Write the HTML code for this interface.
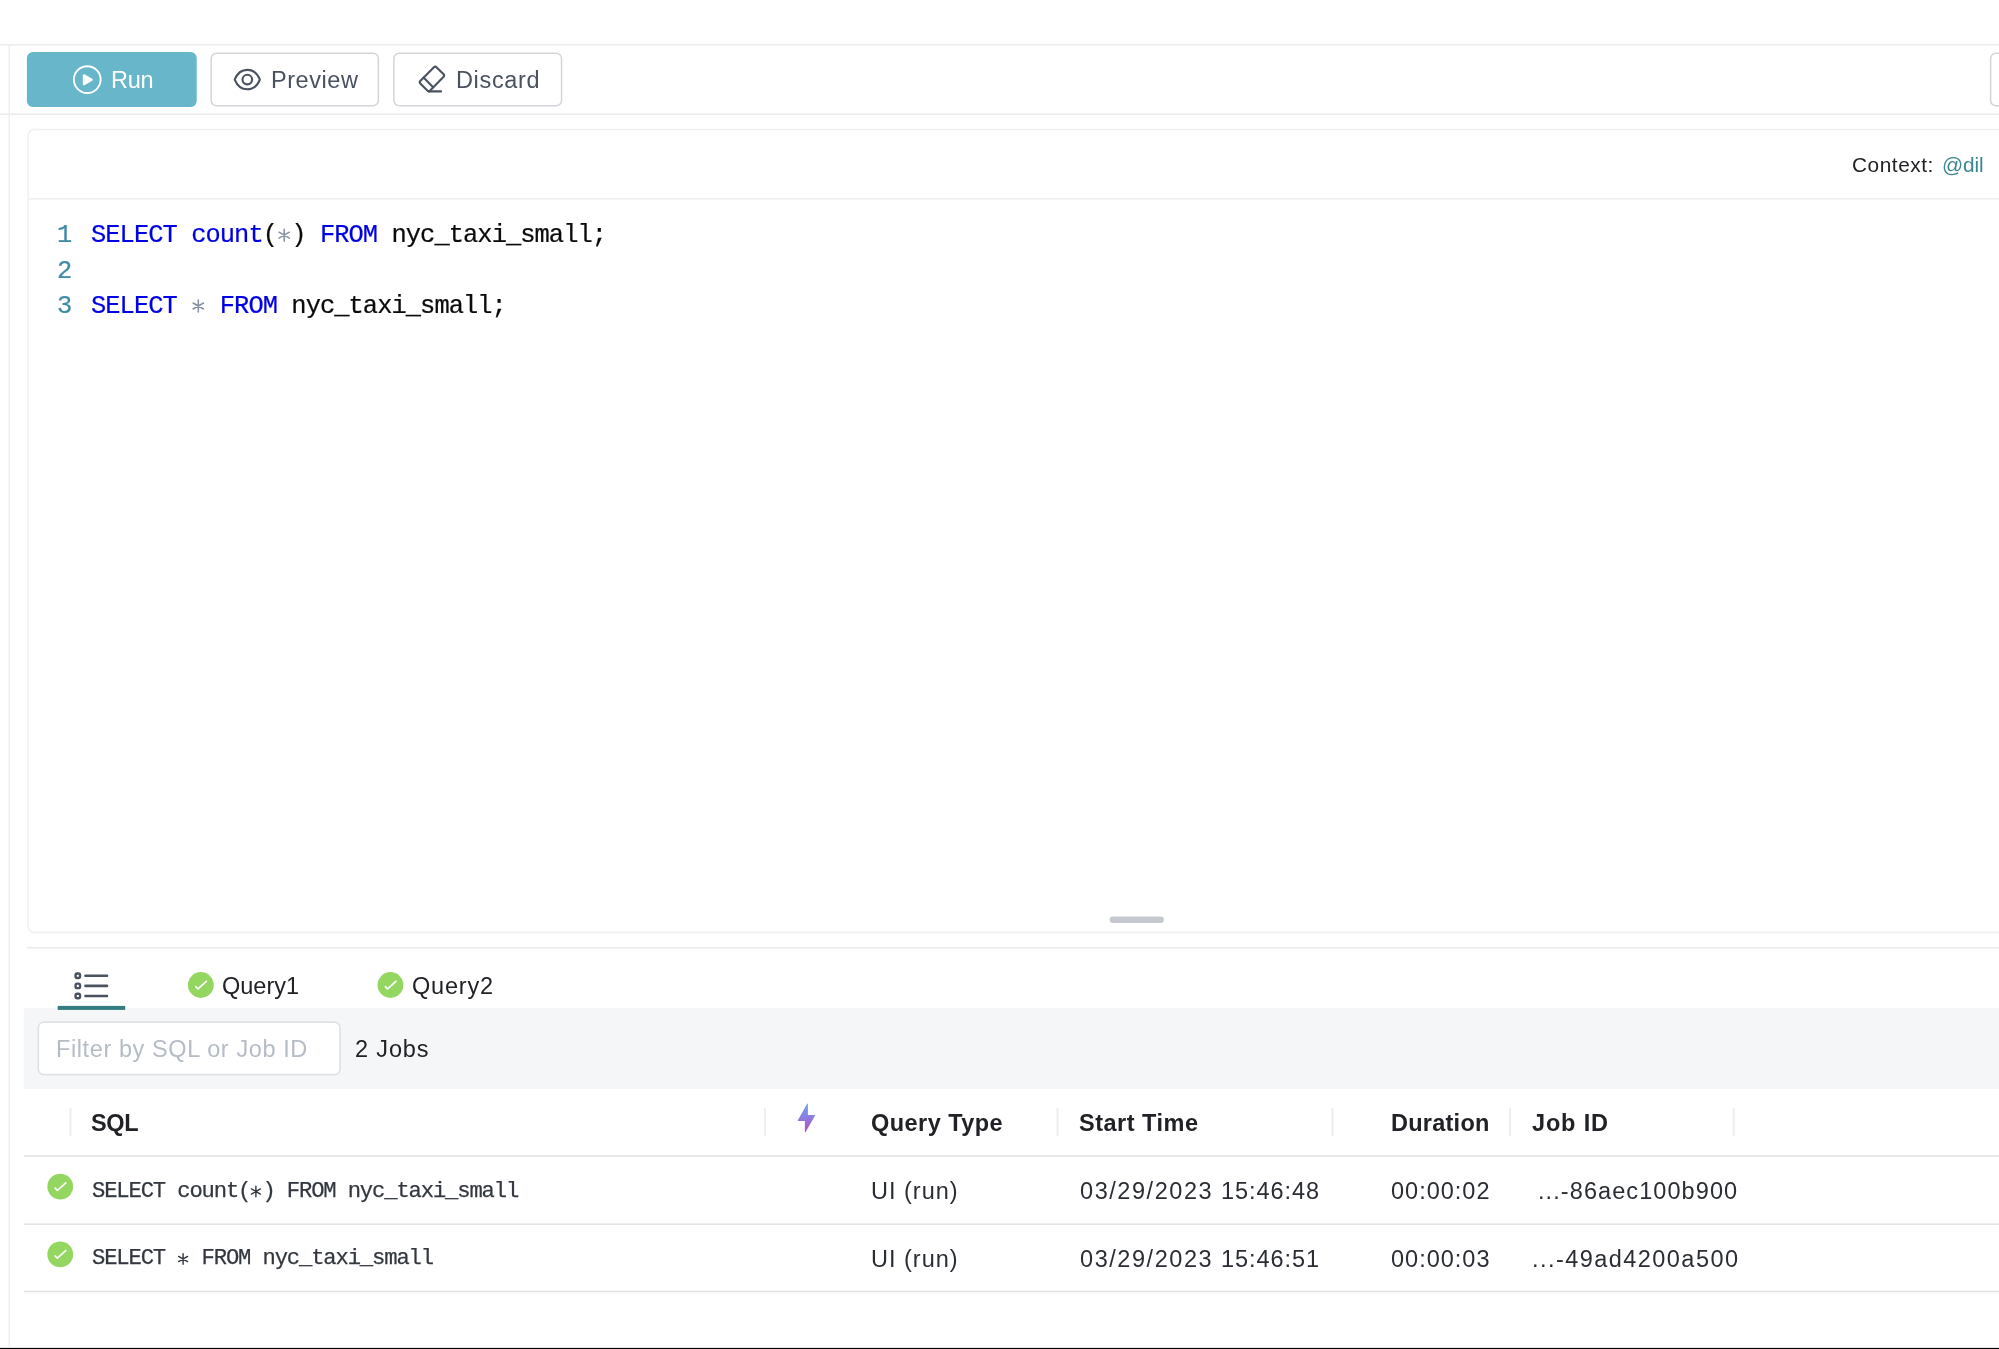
<!DOCTYPE html>
<html>
<head>
<meta charset="utf-8">
<title>SQL Runner</title>
<style>
  html, body { margin: 0; padding: 0; }
  body {
    width: 1999px; height: 1349px; overflow: hidden; position: relative;
    background: #ffffff;
    font-family: "Liberation Sans", sans-serif;
    color: #202226;
  }
  .abs { position: absolute; }
  .t, .code, .tdm { will-change: transform; }
  .t { position: absolute; white-space: nowrap; font-size: 23.5px; line-height: 30px; }
  .btnt { color: #4a5260; }
  .code {
    position: absolute; font-family: "Liberation Mono", monospace; font-size: 25.4px;
    letter-spacing: -0.93px; white-space: pre; line-height: 35.6px; color: #0b0b0b;
    -webkit-text-stroke: 0.22px currentColor;
  }
  .ln { color: #3f8ba6; }
  .kw { color: #0000e6; }
  .op { color: transparent; -webkit-text-stroke: 0 transparent; }
  .th { font-weight: bold; color: #202226; }
  .td { color: #2a2d33; }
  .tdm { position: absolute; font-family: "Liberation Mono", monospace; font-size: 22.2px; letter-spacing: -1.14px;
         line-height: 30px; color: #33383f; white-space: pre; -webkit-text-stroke: 0.25px currentColor; }
</style>
</head>
<body>

<!-- geometry layer: lines, borders, icons -->
<svg class="abs" style="left:0; top:0;" width="1999" height="1349" viewBox="0 0 1999 1349">
  <defs>
    <linearGradient id="bolt" x1="0" y1="0" x2="0" y2="1">
      <stop offset="0" stop-color="#66a8f6"/><stop offset="0.45" stop-color="#8a80e0"/><stop offset="1" stop-color="#b84dc6"/>
    </linearGradient>
    <g id="ok">
      <circle cx="0" cy="0" r="12.900" fill="#93d660"/>
      <path d="M-5.100 1.600 L-2.900 3.800 L5.500 -3.700" fill="none" stroke="#fff" stroke-width="1.750" stroke-linecap="round" stroke-linejoin="round"/>
    </g>
  </defs>

  <!-- frame lines -->
  <rect x="0" y="44.15" width="1999" height="1.5" fill="#e9ebee"/>
  <rect x="0" y="113.45" width="1999" height="1.5" fill="#e8ebef"/>
  <rect x="8.450" y="45" width="1.500" height="1302" fill="#eef0f2"/>

  <!-- Run button -->
  <rect x="26.9" y="52" width="169.8" height="55" rx="6" fill="#68b6c9"/>
  <circle cx="87.25" cy="79.6" r="13.4" fill="none" stroke="#fff" stroke-width="1.9"/>
  <path d="M83.9 75.3 L91.7 79.75 L83.9 84.2 Z" fill="#fff" stroke="#fff" stroke-width="2.2" stroke-linejoin="round"/>

  <!-- Preview button -->
  <rect x="211.15" y="53.15" width="167.2" height="52.7" rx="5.5" fill="#fff" stroke="#d2d5da" stroke-width="1.5"/>
  <path d="M234.700 79.600 C237.600 72.400 242.600 69.900 247.300 69.900 C252 69.900 257 72.400 259.900 79.600 C257 86.800 252 89.300 247.300 89.300 C242.600 89.300 237.600 86.800 234.700 79.600 Z" fill="none" stroke="#4a5260" stroke-width="2.100" stroke-linejoin="round"/>
  <circle cx="247.3" cy="79.6" r="4.8" fill="none" stroke="#4a5260" stroke-width="2.1"/>

  <!-- Discard button -->
  <rect x="393.85" y="53.15" width="167.7" height="52.7" rx="5.5" fill="#fff" stroke="#d2d5da" stroke-width="1.5"/>
  <g fill="none" stroke="#4a5260" stroke-width="2.100" stroke-linejoin="round" stroke-linecap="round">
    <path d="M433.700 67.400 Q435.200 65.900 436.700 67.400 L443.400 74 Q444.900 75.500 443.400 77 L429.200 91.400 Q428 91.400 427.100 90.300 L420.500 83.700 Q419 82.200 420.500 80.700 Z"/>
    <path d="M423.600 77.600 L433.100 87.200"/>
    <path d="M429 91.400 L441 91.400"/>
  </g>

  <!-- cut-off button at right edge -->
  <rect x="1990.600" y="53.15" width="60" height="52.7" rx="5.5" fill="#fff" stroke="#d2d5da" stroke-width="1.5"/>

  <!-- editor box -->
  <rect x="28.200" y="129.500" width="2100" height="803" rx="6" fill="none" stroke="#eef0f2" stroke-width="1.500"/>
  <rect x="28" y="198.150" width="1971" height="1.500" fill="#eceef1"/>
  <rect x="1109.700" y="916.500" width="54.200" height="6.500" rx="3.250" fill="#c5c8ce"/>

  <!-- separator -->
  <rect x="27" y="946.950" width="1972" height="1.500" fill="#e9ebee"/>

  <!-- list icon -->
  <g fill="none" stroke="#4a5260" stroke-linecap="round">
    <rect x="75.550" y="973.450" width="4.500" height="4.500" rx="1.700" stroke-width="2.400"/>
    <rect x="75.550" y="983.650" width="4.500" height="4.500" rx="1.700" stroke-width="2.400"/>
    <rect x="75.550" y="993.750" width="4.500" height="4.500" rx="1.700" stroke-width="2.400"/>
    <path d="M85.500 975.700 H107 M85.500 985.900 H107 M85.500 996 H107" stroke-width="2.600"/>
  </g>

  <!-- tab status icons -->
  <use href="#ok" x="200.850" y="985"/>
  <use href="#ok" x="390.450" y="985"/>

  <!-- filter bar -->
  <rect x="23.800" y="1008.300" width="1976" height="80.600" fill="#f5f6f8"/>
  <rect x="57.700" y="1005.900" width="67.500" height="4" fill="#337c81"/>
  <rect x="38.350" y="1022.150" width="301.600" height="52.500" rx="5.500" fill="#fff" stroke="#dfe1e3" stroke-width="1.600"/>

  <!-- header separators -->
  <g fill="#eceef2">
    <rect x="69.500" y="1108" width="2" height="28"/>
    <rect x="764" y="1108" width="2" height="28"/>
    <rect x="1056.500" y="1108" width="2" height="28"/>
    <rect x="1331.500" y="1108" width="2" height="28"/>
    <rect x="1509" y="1108" width="2" height="28"/>
    <rect x="1732.700" y="1108" width="2" height="28"/>
  </g>
  <path d="M807.300 1103.600 L807.900 1103.900 L807.900 1114.900 L814.600 1114.900 L815 1115.700 L805.500 1132.300 L804.900 1132 L804.900 1121 L798.200 1121 L797.800 1120.200 Z" fill="url(#bolt)"/>

  <!-- row lines -->
  <rect x="23.800" y="1155.200" width="1976" height="1.600" fill="#e2e3e5"/>
  <rect x="23.800" y="1223.400" width="1976" height="1.600" fill="#e2e3e5"/>
  <rect x="23.800" y="1290.700" width="1976" height="1.600" fill="#e2e3e5"/>

  <use href="#ok" x="60.250" y="1186.600"/>
  <use href="#ok" x="60.250" y="1254.400"/>

  <!-- asterisks -->
  <g stroke-linecap="round" fill="none">
    <g stroke="#8690a0" stroke-width="1.500">
      <path d="M284.2 229.200 V241.200 M279 232.200 L289.400 238.200 M279 238.200 L289.400 232.200"/>
      <path d="M198.3 300 V312 M193.100 303 L203.500 309 M193.100 309 L203.500 303"/>
    </g>
    <g stroke="#33383f" stroke-width="1.400">
      <path d="M255.900 1186.300 V1196.700 M251.400 1188.900 L260.400 1194.100 M251.400 1194.100 L260.400 1188.900"/>
      <path d="M183.100 1253.800 V1264.200 M178.600 1256.400 L187.600 1261.600 M178.600 1261.600 L187.600 1256.400"/>
    </g>
  </g>
  <!-- bottom dark edge -->
  <rect x="0" y="1347.900" width="1999" height="2" fill="#000"/>
</svg>

<!-- toolbar text -->
<div class="t" style="left:110.500px; top:64.500px; color:#fff; letter-spacing:-0.300px;">Run</div>
<div class="t btnt" style="left:271px; top:64.500px; letter-spacing:0.550px;">Preview</div>
<div class="t btnt" style="left:456px; top:64.500px; letter-spacing:0.650px;">Discard</div>

<!-- context -->
<div class="t" style="left:1852px; top:150px; font-size:20.800px; letter-spacing:0.55px; color:#202226;">Context:</div>
<div class="t" style="left:1941.800px; top:150px; font-size:20.800px; letter-spacing:-0.100px; color:#3b8790;">@dil</div>

<!-- code -->
<div class="code" style="left:56.500px; top:218px;"><span class="ln">1</span>
<span class="ln">2</span>
<span class="ln">3</span></div>
<div class="code" style="left:91px; top:218px;"><span class="kw">SELECT</span> <span class="kw">count</span>(<span class="op">*</span>) <span class="kw">FROM</span> nyc_taxi_small;

<span class="kw">SELECT</span> <span class="op">*</span> <span class="kw">FROM</span> nyc_taxi_small;</div>

<!-- tabs -->
<div class="t" style="left:222px; top:971px;">Query1</div>
<div class="t" style="left:412px; top:971px; letter-spacing:0.800px;">Query2</div>

<!-- filter -->
<div class="t" style="left:55.500px; top:1034px; color:#b5bcc6; letter-spacing:0.600px;">Filter by SQL or Job ID</div>
<div class="t" style="left:354.500px; top:1034px; letter-spacing:0.850px;">2 Jobs</div>

<!-- header -->
<div class="t th" style="left:91.300px; top:1107.700px; letter-spacing:-0.400px;">SQL</div>
<div class="t th" style="left:870.500px; top:1107.700px; letter-spacing:0.450px;">Query Type</div>
<div class="t th" style="left:1079.300px; top:1107.700px; letter-spacing:0.500px;">Start Time</div>
<div class="t th" style="left:1391px; top:1107.700px; letter-spacing:0.250px;">Duration</div>
<div class="t th" style="left:1532px; top:1107.700px; letter-spacing:0.850px;">Job ID</div>

<!-- row 1 -->
<div class="tdm" style="left:91.500px; top:1176.500px;">SELECT count(<span class="op">*</span>) FROM nyc_taxi_small</div>
<div class="t td" style="left:871px; top:1176px; letter-spacing:1px;">UI (run)</div>
<div class="t td" style="left:1080px; top:1176px; letter-spacing:1.560px;">03/29/2023</div>
<div class="t td" style="left:1221.300px; top:1176px; letter-spacing:0.950px;">15:46:48</div>
<div class="t td" style="left:1391px; top:1176px; letter-spacing:1px;">00:00:02</div>
<div class="t td" style="left:1537.800px; top:1176px; letter-spacing:1.080px;">...-86aec100b900</div>

<!-- row 2 -->
<div class="tdm" style="left:91.500px; top:1243.900px;">SELECT <span class="op">*</span> FROM nyc_taxi_small</div>
<div class="t td" style="left:871px; top:1244px; letter-spacing:1px;">UI (run)</div>
<div class="t td" style="left:1080px; top:1244px; letter-spacing:1.560px;">03/29/2023</div>
<div class="t td" style="left:1221.300px; top:1244px; letter-spacing:0.950px;">15:46:51</div>
<div class="t td" style="left:1391px; top:1244px; letter-spacing:1px;">00:00:03</div>
<div class="t td" style="left:1531.600px; top:1244px; letter-spacing:1.450px;">...-49ad4200a500</div>

</body>
</html>
